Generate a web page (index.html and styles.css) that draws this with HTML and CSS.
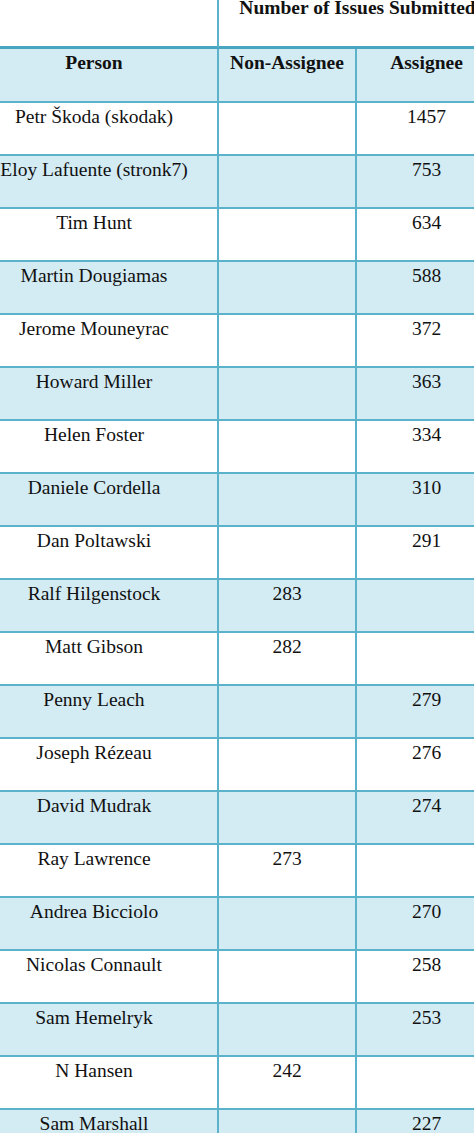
FILE: index.html
```html
<!DOCTYPE html>
<html>
<head>
<meta charset="utf-8">
<link rel="stylesheet" href="styles.css">
</head>
<body>
<table class="issues">
  <colgroup>
    <col class="c-person">
    <col class="c-non">
    <col class="c-ass">
  </colgroup>
  <thead>
    <tr class="top">
      <th class="blank"></th>
      <th class="group" colspan="2">Number of Issues Submitted</th>
    </tr>
    <tr class="head">
      <th>Person</th>
      <th>Non-Assignee</th>
      <th>Assignee</th>
    </tr>
  </thead>
  <tbody>
    <tr><td>Petr Škoda (skodak)</td><td></td><td>1457</td></tr>
    <tr><td>Eloy Lafuente (stronk7)</td><td></td><td>753</td></tr>
    <tr><td>Tim Hunt</td><td></td><td>634</td></tr>
    <tr><td>Martin Dougiamas</td><td></td><td>588</td></tr>
    <tr><td>Jerome Mouneyrac</td><td></td><td>372</td></tr>
    <tr><td>Howard Miller</td><td></td><td>363</td></tr>
    <tr><td>Helen Foster</td><td></td><td>334</td></tr>
    <tr><td>Daniele Cordella</td><td></td><td>310</td></tr>
    <tr><td>Dan Poltawski</td><td></td><td>291</td></tr>
    <tr><td>Ralf Hilgenstock</td><td>283</td><td></td></tr>
    <tr><td>Matt Gibson</td><td>282</td><td></td></tr>
    <tr><td>Penny Leach</td><td></td><td>279</td></tr>
    <tr><td>Joseph Rézeau</td><td></td><td>276</td></tr>
    <tr><td>David Mudrak</td><td></td><td>274</td></tr>
    <tr><td>Ray Lawrence</td><td>273</td><td></td></tr>
    <tr><td>Andrea Bicciolo</td><td></td><td>270</td></tr>
    <tr><td>Nicolas Connault</td><td></td><td>258</td></tr>
    <tr><td>Sam Hemelryk</td><td></td><td>253</td></tr>
    <tr><td>N Hansen</td><td>242</td><td></td></tr>
    <tr><td>Sam Marshall</td><td></td><td>227</td></tr>
  </tbody>
</table>
</body>
</html>
```

FILE: styles.css
```css
html, body {
  margin: 0;
  padding: 0;
  background: #ffffff;
  overflow: hidden;
}

body {
  width: 474px;
  height: 1133px;
}

.issues {
  border-collapse: separate;
  border-spacing: 0;
  table-layout: fixed;
  width: 525px;
  margin-left: -29px;
  font-family: "Liberation Serif", "Times New Roman", serif;
  font-size: 19.5px;
  color: #111111;
}

.c-person { width: 248px; }
.c-non { width: 138px; }
.c-ass { width: 139px; }

.issues th,
.issues td {
  box-sizing: content-box;
  padding: 3px 0 0 0;
  line-height: 22px;
  text-align: center;
  vertical-align: top;
  border-right: 2px solid #5bb2cb;
  border-bottom: 2px solid #5bb2cb;
  white-space: nowrap;
}

.issues th:last-child,
.issues td:last-child {
  border-right: none;
}

.issues th {
  font-weight: bold;
}

.top th {
  height: 46px;
  padding: 0;
  line-height: 16px;
  border-bottom: 3px solid #4aa6c0;
}

.top .blank {
  border-right: 2px solid #5bb2cb;
}

.head th {
  height: 49px;
  padding-top: 3px;
  background: #d3ebf3;
}

.issues tbody td {
  height: 48px;
}

.issues tbody tr:nth-child(even) td {
  background: #d3ebf3;
}
```
